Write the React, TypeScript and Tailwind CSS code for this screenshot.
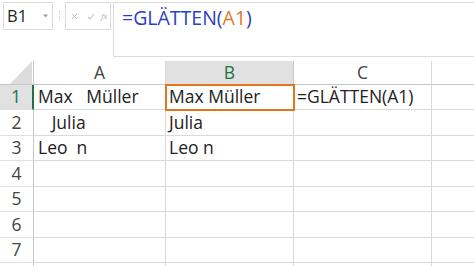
const cols = ["A", "B", "C"];

const rows: { a: string; b: string; c: string }[] = [
  { a: "Max   Müller", b: "Max Müller", c: "=GLÄTTEN(A1)" },
  { a: "   Julia", b: "Julia", c: "" },
  { a: "Leo  n", b: "Leo n", c: "" },
  { a: "", b: "", c: "" },
  { a: "", b: "", c: "" },
  { a: "", b: "", c: "" },
  { a: "", b: "", c: "" },
  { a: "", b: "", c: "" },
];

const rowHeights = ["h-[25px]", "h-[26px]", "h-[25px]", "h-[26px]", "h-[25px]", "h-[26px]", "h-[25px]", "h-[26px]"];

export default function App() {
  return (
    <div
      className="w-[474px] h-[266px] overflow-hidden bg-white text-[#222]"
      style={{ fontFamily: '"Open Sans", "Liberation Sans", sans-serif' }}
    >
      {/* Formula bar */}
      <div className="flex h-[61px] pt-[2px]">
        {/* Name box */}
        <div className="ml-[3px] w-[50px] h-[28px] border border-[#dcdcdc] flex items-center pl-[3px] pr-[3px]">
          <span className="text-[16.5px] leading-none flex-1">B1</span>
          <svg width="5" height="4" viewBox="0 0 5 4" className="mr-[1px]">
            <path d="M0 0.5 L5 0.5 L2.5 3.5 Z" fill="#9a9a9a" />
          </svg>
        </div>
        {/* separator */}
        <div className="w-[12px] flex justify-center pt-[9px]">
          <div className="w-px h-[10px] border-l border-dotted border-[#d0d0d0]" />
        </div>
        {/* cancel / enter / fx */}
        <div className="w-[46px] h-[28px] border border-[#dcdcdc] flex items-center pl-[5px]">
          <svg width="7" height="7" viewBox="0 0 7 7">
            <path d="M1 1 L6 6 M6 1 L1 6" stroke="#c4c4c4" strokeWidth="1" />
          </svg>
          <svg width="8" height="7" viewBox="0 0 8 7" className="ml-[9px]">
            <path d="M1 4 L3 6 L7 1" stroke="#c4c4c4" strokeWidth="1.1" fill="none" />
          </svg>
          <span className="ml-[6px] text-[8px] italic leading-none text-[#b8b8b8]">fx</span>
        </div>
        {/* Formula input */}
        <div className="ml-[2px] flex-1 h-[55px] border-l border-t border-b border-[#dcdcdc] pl-[8px] pt-[1px]">
          <span className="text-[19.5px] leading-[28px] whitespace-pre">
            <span className="text-[#2b40c4]">=GLÄTTEN(</span>
            <span className="text-[#e2761f]">A1</span>
            <span className="text-[#2b40c4]">)</span>
          </span>
        </div>
      </div>

      {/* Sheet grid */}
      <div className="grid grid-cols-[34px_132px_128px_138px_1fr]">
        {/* header row */}
        <div className="h-[24px] border-r border-b border-[#c6c6c6] relative overflow-hidden">
          <svg width="34" height="24" viewBox="0 0 34 24" className="absolute inset-0">
            <path d="M32 0 L32 23 L10 23 Z" fill="#dcdcdc" />
          </svg>
        </div>
        {cols.map((c) => (
          <div
            key={c}
            className={`h-[24px] border-r border-b flex items-center justify-center text-[17.5px] leading-none ${
              c === "B"
                ? "bg-[#e1e1e1] text-[#217346] border-[#c6c6c6]"
                : "text-[#444] border-[#dadada] border-b-[#c6c6c6]"
            }`}
          >
            {c}
          </div>
        ))}
        <div className="h-[24px] border-b border-[#c6c6c6]" />

        {rows.map((r, i) => {
          const h = rowHeights[i];
          const sel = i === 0;
          return (
            <div key={i} className="contents">
              <div
                className={`${h} border-b border-[#e0e0e0] flex items-center justify-center text-[17.5px] leading-none ${
                  sel
                    ? "bg-[#e1e1e1] text-[#217346] border-r-2 border-r-[#217346]"
                    : "text-[#444] border-r border-r-[#c6c6c6]"
                }`}
              >
                {i < 7 ? i + 1 : ""}
              </div>
              <div className={`${h} border-r border-b border-[#dadada] flex items-center pl-[4px] text-[17.5px] leading-none whitespace-pre`}>
                {r.a}
              </div>
              <div
                className={`${h} border-r border-b border-[#dadada] flex items-center pl-[3px] text-[17.5px] leading-none whitespace-pre ${
                  sel ? "outline-2 outline-[#e2761f] -outline-offset-1 relative" : ""
                }`}
              >
                {r.b}
              </div>
              <div className={`${h} border-r border-b border-[#dadada] flex items-center pl-[3px] text-[17.5px] leading-none whitespace-pre`}>
                {r.c}
              </div>
              <div className={`${h} border-b border-[#dadada]`} />
            </div>
          );
        })}
      </div>
    </div>
  );
}
